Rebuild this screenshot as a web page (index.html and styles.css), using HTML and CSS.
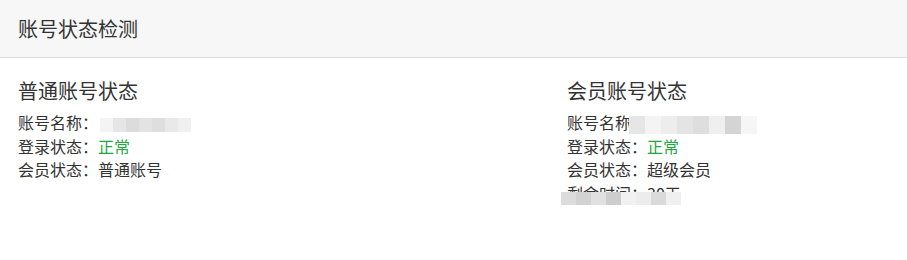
FILE: index.html
```html
<!DOCTYPE html>
<html lang="zh-CN">
<head>
  <meta charset="UTF-8">
  <title>账号状态检测</title>
  <link rel="stylesheet" href="styles.css">
</head>
<body>
  <header class="panel-header">账号状态检测</header>
  <main class="panel-body">
    <section class="status-col">
      <h2>普通账号状态</h2>
      <p>账号名称：<span class="mosaic">
        <i style="background:#f4f4f4"></i><i style="background:#e6e6e6"></i><i style="background:#dcdcdc"></i><i style="background:#e3e3e3"></i><i style="background:#dedede"></i><i style="background:#e9e9e9"></i><i style="background:#f0f0f0"></i>
      </span></p>
      <p>登录状态：<span class="ok">正常</span></p>
      <p>会员状态：普通账号</p>
    </section>
    <section class="status-col">
      <h2>会员账号状态</h2>
      <p>账号名称：<span class="mosaic wide">
        <i style="background:#e6e6e6"></i><i style="background:#f4f4f4"></i><i style="background:#ededed"></i><i style="background:#e4e4e4"></i><i style="background:#dedede"></i><i style="background:#efefef"></i><i style="background:#d4d4d4"></i><i style="background:#f6f6f6"></i>
      </span></p>
      <p>登录状态：<span class="ok">正常</span></p>
      <p>会员状态：超级会员</p>
      <p class="masked">剩余时间：30天
        <span class="mosaic cover">
          <i style="background:#dcdcdc"></i><i style="background:#d2d2d2"></i><i style="background:#e0e0e0"></i><i style="background:#cdcdcd"></i><i style="background:#f1f1f1"></i><i style="background:#ececec"></i><i style="background:#dadada"></i><i style="background:#f0f0f0"></i>
        </span>
      </p>
    </section>
  </main>
</body>
</html>
```

FILE: styles.css
```css
body { margin: 0; font-family: "Noto Sans CJK SC", "Noto Sans", sans-serif; color: #333; background: #fff; }
.panel-header { height: 58px; line-height: 58px; padding: 0 18px; font-size: 20px; background: #f7f7f7; border-bottom: 1px solid #dcdcdc; box-sizing: border-box; }
.panel-body { display: grid; grid-template-columns: 549px 1fr; padding: 19px 18px 0; }
.status-col h2 { margin: 0 0 6px; font-size: 20px; font-weight: normal; line-height: 28px; }
.status-col p { margin: 0; font-size: 16px; line-height: 23.5px; }
.ok { color: #20a83f; }
.mosaic { display: inline-flex; vertical-align: middle; height: 14px; margin-left: 2px; }
.mosaic i { width: 13px; height: 100%; }
.mosaic.wide { height: 18px; margin-left: -18px; }
.mosaic.wide i { width: 16px; }
.masked { position: relative; }
.mosaic.cover { position: absolute; left: -6px; top: 10px; height: 14px; margin: 0; }
.mosaic.cover i { width: 15px; }
```
